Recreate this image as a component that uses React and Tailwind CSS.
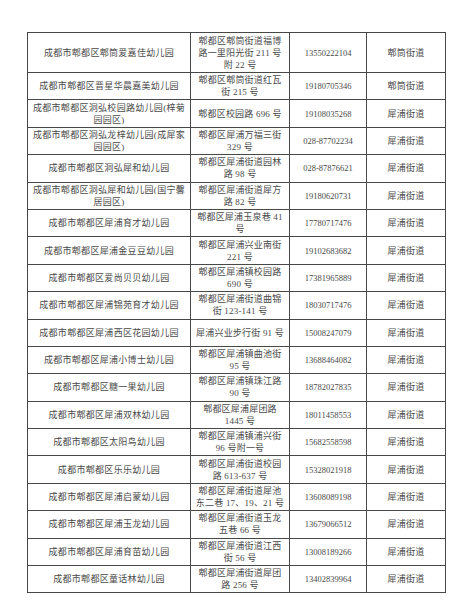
import React from "react";

const rows = [
  ["成都市郫都区郫筒爱嘉佳幼儿园", ["郫都区郫筒街道福博", "路一里阳光街 211 号", "附 22 号"], "13550222104", "郫筒街道"],
  ["成都市郫都区晋星华晨嘉美幼儿园", ["郫都区郫筒街道红瓦", "街 215 号"], "19180705346", "郫筒街道"],
  [["成都市郫都区洞弘校园路幼儿园(梓菊", "园园区)"], "郫都区校园路 696 号", "19108035268", "犀浦街道"],
  [["成都市郫都区洞弘龙梓幼儿园(成犀家", "园园区)"], ["郫都区犀浦万福三街", "329 号"], "028-87702234", "犀浦街道"],
  ["成都市郫都区洞弘犀和幼儿园", ["郫都区犀浦街道园林", "路 98 号"], "028-87876621", "犀浦街道"],
  [["成都市郫都区洞弘犀和幼儿园(国宁馨", "居园区)"], ["郫都区犀浦街道犀方", "路 82 号"], "19180620731", "犀浦街道"],
  ["成都市郫都区犀浦育才幼儿园", ["郫都区犀浦玉泉巷 41", "号"], "17780717476", "犀浦街道"],
  ["成都市郫都区犀浦金豆豆幼儿园", ["郫都区犀浦兴业南街", "221 号"], "19102683682", "犀浦街道"],
  ["成都市郫都区爱尚贝贝幼儿园", ["郫都区犀浦镇校园路", "690 号"], "17381965889", "犀浦街道"],
  ["成都市郫都区犀浦锦苑育才幼儿园", ["郫都区犀浦街道曲锦", "街 123-141 号"], "18030717476", "犀浦街道"],
  ["成都市郫都区犀浦西区花园幼儿园", "犀浦兴业步行街 91 号", "15008247079", "犀浦街道"],
  ["成都市郫都区犀浦小博士幼儿园", ["郫都区犀浦镇曲池街", "95 号"], "13688464082", "犀浦街道"],
  ["成都市郫都区糖一果幼儿园", ["郫都区犀浦镇珠江路", "90 号"], "18782027835", "犀浦街道"],
  ["成都市郫都区犀浦双林幼儿园", ["郫都区犀浦犀团路", "1445 号"], "18011458553", "犀浦街道"],
  ["成都市郫都区太阳鸟幼儿园", ["郫都区犀浦镇浦兴街", "96 号附一号"], "15682558598", "犀浦街道"],
  ["成都市郫都区乐乐幼儿园", ["郫都区犀浦街道校园", "路 613-637 号"], "15328021918", "犀浦街道"],
  ["成都市郫都区犀浦启蒙幼儿园", ["郫都区犀浦街道犀池", "东二巷 17、19、21 号"], "13608089198", "犀浦街道"],
  ["成都市郫都区犀浦玉龙幼儿园", ["郫都区犀浦街道玉龙", "五巷 66 号"], "13679066512", "犀浦街道"],
  ["成都市郫都区犀浦育苗幼儿园", ["郫都区犀浦街道江西", "街 56 号"], "13008189266", "犀浦街道"],
  ["成都市郫都区童话林幼儿园", ["郫都区犀浦街道犀团", "路 256 号"], "13402839964", "犀浦街道"],
];

const Lines = ({ value }) => {
  const list = Array.isArray(value) ? value : [value];
  return list.map((line, i) => (
    <div key={i} className="whitespace-nowrap">
      {line}
    </div>
  ));
};

const App = () => {
  return (
    <div
      className="w-[476px] h-[600px] bg-white pt-[32px] pl-[27px] text-[#4a4a4a]"
      style={{ fontFamily: '"Liberation Serif", "Noto Sans CJK SC", serif' }}
    >
      <table className="table-fixed border-collapse w-[418px]">
        <colgroup>
          <col className="w-[163px]" />
          <col className="w-[99px]" />
          <col className="w-[77px]" />
          <col className="w-[79px]" />
        </colgroup>
        <tbody>
          {rows.map((row, i) => (
            <tr key={i} className={i === 0 ? "h-[40px]" : "h-[27.4px]"}>
              <td className="border border-[#484848] text-center align-middle p-0 text-[9px] leading-[12px] tracking-[0.3px]">
                <Lines value={row[0]} />
              </td>
              <td className="border border-[#484848] text-center align-middle p-0 text-[9px] leading-[12px] tracking-[0.2px]">
                <Lines value={row[1]} />
              </td>
              <td className="border border-[#484848] text-center align-middle p-0 text-[8.5px] leading-[12px]">
                {row[2]}
              </td>
              <td className="border border-[#484848] text-center align-middle p-0 text-[9px] leading-[12px] tracking-[0.3px]">
                {row[3]}
              </td>
            </tr>
          ))}
        </tbody>
      </table>
    </div>
  );
};

export default App;
